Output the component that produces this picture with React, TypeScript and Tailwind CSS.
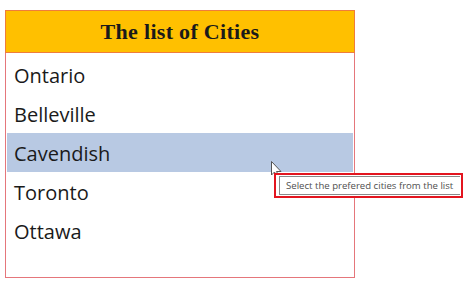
import React from "react";

const cities = ["Ontario", "Belleville", "Cavendish", "Toronto", "Ottawa"];

export default function App() {
  return (
    <div className="relative w-[474px] h-[293px] bg-white overflow-hidden">
      <div className="ml-[5px] mt-[10px] w-[350px]">
        <div className="h-[43px] bg-[#ffc000] border border-[#ee7d3c] flex items-center justify-center">
          <span
            className="text-[22px] font-bold text-[#1a1a1a] leading-none tracking-[0.3px] pt-[1px]"
            style={{ fontFamily: '"Liberation Serif", serif' }}
          >
            The list of Cities
          </span>
        </div>
        <div className="h-[225px] border-[1.5px] border-t-0 border-[#e5767b] pt-[2px] px-[1px]">
          {cities.map((c) => (
            <div
              key={c}
              className={`h-[39px] flex items-center pl-[7px] pt-[2px] text-[20px] text-[#1a1a1a] ${
                c === "Cavendish" ? "bg-[#b8c9e3]" : ""
              }`}
              style={{ fontFamily: '"Open Sans", sans-serif' }}
            >
              {c}
            </div>
          ))}
        </div>
      </div>

      <svg
        className="absolute left-[271px] top-[161px]"
        width="12"
        height="18"
        viewBox="0 0 12 18"
      >
        <path
          d="M0.5 0.5 L0.5 14 L3.5 11 L6 16.5 L8 15.5 L5.5 10.5 L10 10.5 Z"
          fill="#ffffff"
          stroke="#555555"
          strokeWidth="1"
          strokeLinejoin="round"
        />
      </svg>

      <div className="absolute left-[274px] top-[173px] w-[189px] h-[25px] border-2 border-[#e3151f] bg-white">
        <div className="absolute left-[3px] top-[1px] right-[1px] bottom-[1px] border border-[#8a8a8a] border-r-0 flex items-center pl-[6px]">
          <span
            className="text-[9.6px] text-[#4f4f4f] whitespace-nowrap leading-none"
            style={{ fontFamily: '"Open Sans", sans-serif' }}
          >
            Select the prefered cities from the list
          </span>
        </div>
      </div>
    </div>
  );
}
